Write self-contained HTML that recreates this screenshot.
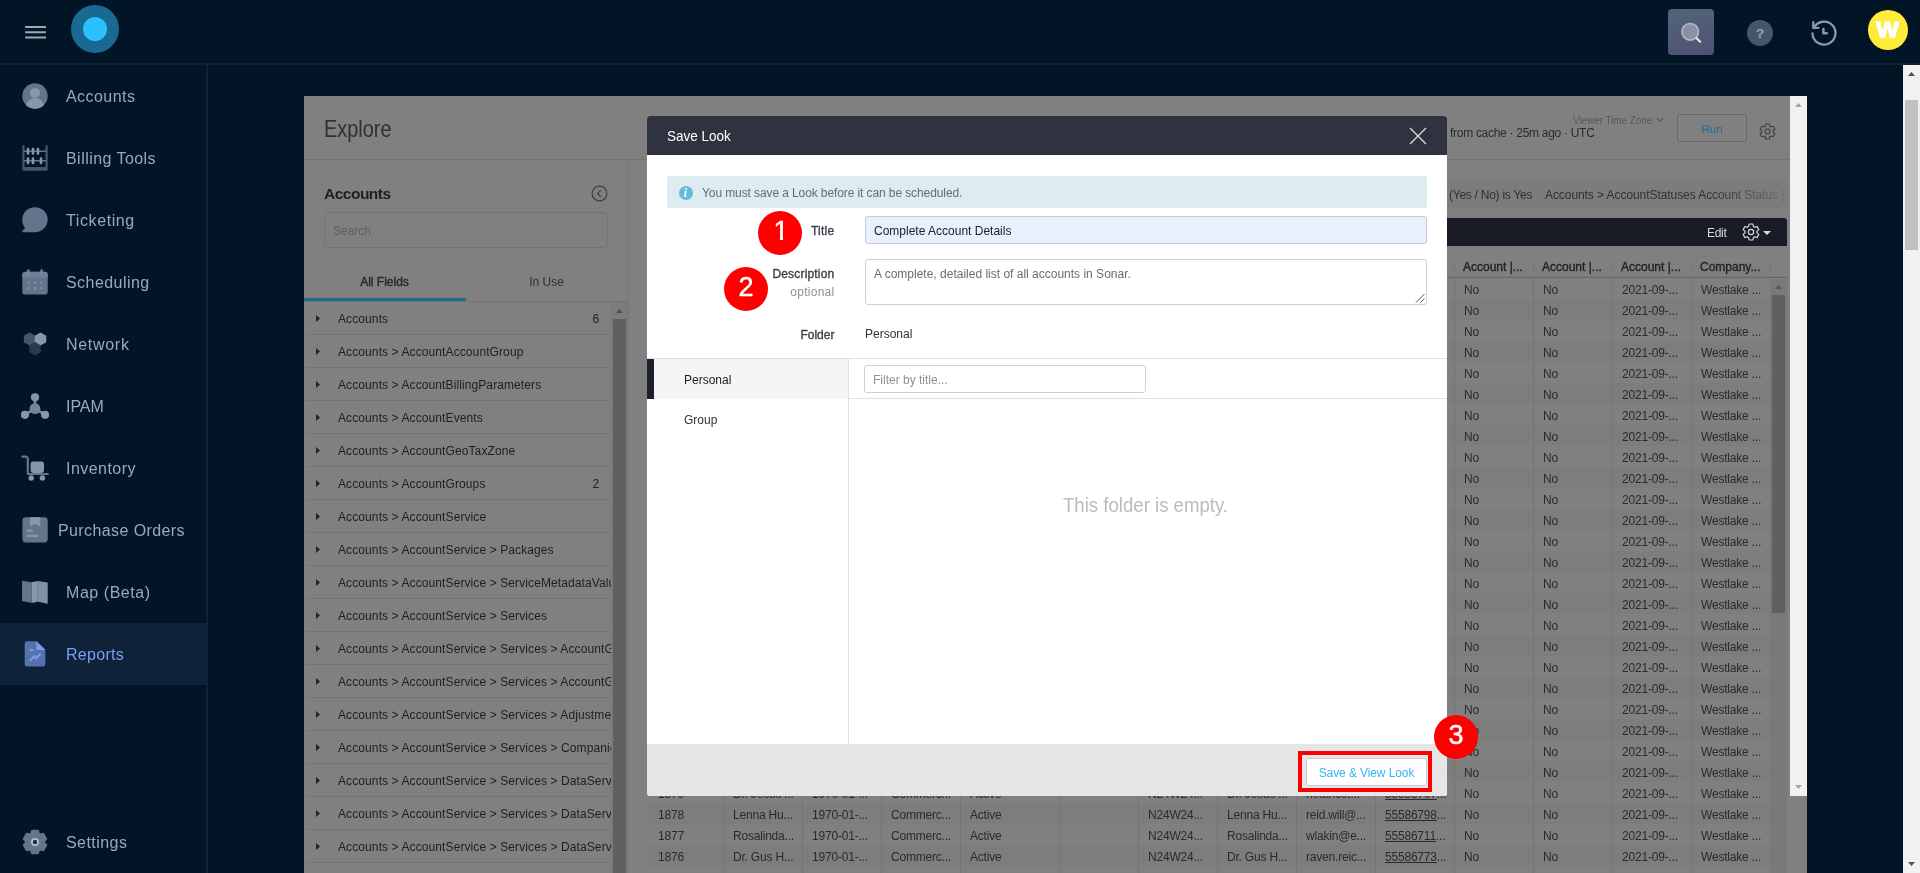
<!DOCTYPE html>
<html lang="en">
<head>
<meta charset="utf-8">
<title>Save Look</title>
<style>
*{box-sizing:border-box;margin:0;padding:0}
html,body{width:1920px;height:873px;overflow:hidden;background:#021527;font-family:"Liberation Sans",sans-serif}
#wrap{position:absolute;left:0;top:0;width:1920px;height:873px;will-change:transform}
.abs{position:absolute}
#topbar{position:absolute;left:0;top:0;width:1920px;height:65px;border-bottom:2px solid #112131}
#sidebar{position:absolute;left:0;top:64px;width:208px;height:809px;border-right:2px solid #112131}
.nav{position:absolute;left:0;width:206px;height:62px;color:#9ca8b9;font-size:16px;letter-spacing:.45px}
.nav span{position:absolute;left:66px;top:22px;line-height:20px;white-space:nowrap}
.nav svg{position:absolute;left:21px;top:17px;width:28px;height:28px}
.nav.active{background:#0e2239;color:#7b9ff2}
/* outer scrollbar */
#osb{position:absolute;left:1903px;top:65px;width:17px;height:808px;background:#f1f1f1}
#osb .thumb{position:absolute;left:2px;top:35px;width:13px;height:150px;background:#c1c1c1}
.arr{position:absolute;width:0;height:0;border-left:4px solid transparent;border-right:4px solid transparent}
/* iframe */
#frame{position:absolute;left:304px;top:96px;width:1503px;height:777px;background:#808080;overflow:hidden;font-family:"Liberation Sans",sans-serif;font-size:12px;color:#222}
#fsb{position:absolute;left:1486px;top:0;width:17px;height:700px;background:#f1f1f1}
/* modal */
#modal{position:absolute;left:343px;top:20px;width:800px;height:680px;background:#fff;border-radius:3px;overflow:hidden}
#mhead{position:absolute;left:0;top:0;width:800px;height:39px;background:#2f3340}

.t12{font-size:12px;line-height:16px;white-space:nowrap}
.lbl{color:#383f48;-webkit-text-stroke:.350px #383f48}
#mtitle{color:#fff;font-size:15px;line-height:20px;white-space:nowrap;transform:scaleX(.9);transform-origin:0 50%}
.red{position:absolute;width:44px;height:44px;border-radius:50%;background:#ff0000;color:#fff;font-size:27px;line-height:41px;text-align:center;-webkit-text-stroke:.500px #fff}
#mfoot{position:absolute;left:0;top:628px;width:800px;height:52px;background:#e6e6e6}


.fi{position:relative;height:33px;border-bottom:1px solid #757575;white-space:nowrap;overflow:hidden;font-size:12px;line-height:34px;color:#1e1e1e;letter-spacing:.100px}
.fi i{position:absolute;left:10px;top:13px;width:4px;height:7px;background:#222;clip-path:polygon(0 0,100% 50%,0 100%)}
.fi span{position:absolute;left:32px;top:0}
.fi b{position:absolute;left:284px;width:12px;top:0;text-align:center;font-weight:normal;font-size:12px;background:#808080}

.th{color:#222;-webkit-text-stroke:.350px #222}
.tr{position:absolute;left:0;width:1122px;height:21px;font-size:12px;line-height:21px;color:#2a2a2a;white-space:nowrap;letter-spacing:-.200px}
.tr.odd{background:#7d7d7d}
.tr span{position:absolute;top:2px}
.red i{position:absolute;background:#ff0000}
.au,.ad{position:absolute;width:7px;height:4px}
.au{clip-path:polygon(50% 0,100% 100%,0 100%)}
.ad{clip-path:polygon(0 0,100% 0,50% 100%)}
</style>
</head>
<body>
<div id="wrap">
<div id="topbar">
  <svg class="abs" style="left:20px;top:20px" width="32" height="24" viewBox="0 0 32 24"><path d="M5.200 6.100h20.800v2H5.200zM5.200 11.300h20.800v2H5.200zM5.200 16.500h20.800v2.100H5.200z" fill="#9ea7b2"/></svg>
  <div class="abs" style="left:71px;top:5px;width:48px;height:48px;border-radius:50%;background:#196a92"></div>
  <div class="abs" style="left:83px;top:17px;width:24px;height:24px;border-radius:50%;background:#2dc0ff"></div>
  <div class="abs" style="left:1783px;top:12px;width:1px;height:40px;background:#06192c"></div><div class="abs" style="left:1856px;top:12px;width:1px;height:40px;background:#06192c"></div>
  <div class="abs" style="left:1668px;top:9px;width:46px;height:46px;border-radius:4px;background:linear-gradient(165deg,#53647a 0%,#4f5273 100%)">
    <svg class="abs" style="left:9px;top:9px" width="28" height="28" viewBox="0 0 28 28"><circle cx="13.200" cy="13.800" r="8.300" fill="#8a90a6" stroke="#b4b9c6" stroke-width="1.600"/><path d="M19.400 20l3.800 3.800" stroke="#e8eaee" stroke-width="2" stroke-linecap="round"/></svg>
  </div>
  <div class="abs" style="left:1747px;top:20px;width:26px;height:26px;border-radius:50%;background:#45566a;color:#8e9bab;font-weight:bold;font-size:13.500px;line-height:27px;text-align:center;-webkit-text-stroke:.400px #8e9bab">?</div>
  <svg class="abs" style="left:1809px;top:18px" width="30" height="30" viewBox="0 0 30 30" fill="none" stroke="#8b98aa" stroke-width="2.300" stroke-linecap="round" stroke-linejoin="round"><path d="M4.700 10A11.500 11.500 0 1 1 3.500 15.500"/><path d="M4.300 4.200v5.600h5.200"/><path d="M14.400 11v4.200h3.400" stroke-width="2.500"/></svg>
  <div class="abs" style="left:1868px;top:10px;width:40px;height:40px;border-radius:50%;background:#ffeb3b;color:#fff;font-weight:bold;font-size:22.500px;line-height:40px;text-align:center;-webkit-text-stroke:1.300px #fff"><span style="display:inline-block;transform:scaleX(1.060)">W</span></div>
</div>
<div id="sidebar">
  <div class="nav" style="top:1px"><svg viewBox="0 0 28 28"><defs><clipPath id="ca"><circle cx="14" cy="14" r="12.7"/></clipPath></defs><circle cx="14" cy="14" r="12.7" fill="#64748b"/><g clip-path="url(#ca)" fill="#8996a8"><circle cx="14" cy="11" r="5"/><ellipse cx="14" cy="25.5" rx="9.3" ry="9.5"/></g></svg><span style="left:66px">Accounts</span></div>
  <div class="nav" style="top:63px"><svg viewBox="0 0 28 28"><path d="M1.3 1.3h2.2v21.8h21v-21.8h2.2v24a1.4 1.4 0 0 1-1.4 1.4h-22.6a1.4 1.4 0 0 1-1.4-1.4z" fill="#46566a"/><path d="M3 7.2h22M3 16.8h22" stroke="#64748b" stroke-width="1.6"/><g fill="#8996a8"><rect x="5.7" y="3.7" width="2.6" height="7" rx="1.3"/><rect x="10.7" y="3.7" width="2.6" height="7" rx="1.3"/><rect x="15.7" y="3.7" width="2.6" height="7" rx="1.3"/><rect x="5.7" y="13.3" width="2.6" height="7" rx="1.3"/><rect x="10.7" y="13.3" width="2.6" height="7" rx="1.3"/><rect x="18.7" y="13.3" width="2.6" height="7" rx="1.3"/></g></svg><span style="left:66px">Billing Tools</span></div>
  <div class="nav" style="top:125px"><svg viewBox="0 0 28 28"><path d="M14 1.2c7 0 12.7 5.3 12.7 12.3S21 26.3 14 26.3H2.2c-.9 0-1.3-1-.7-1.6l2.600-2.700C2.300 19.800 1.300 16.800 1.300 13.500 1.300 6.500 7 1.200 14 1.200z" fill="#64748b"/></svg><span style="left:66px;letter-spacing:.600px">Ticketing</span></div>
  <div class="nav" style="top:187px"><svg viewBox="0 0 28 28"><rect x="1.3" y="3.800" width="25.400" height="22.800" rx="3.200" fill="#64748b"/><path d="M1.300 9.800v-2.800a3.200 3.200 0 0 1 3.200-3.200h19a3.200 3.200 0 0 1 3.200 3.200v2.800z" fill="#6f7f95"/><rect x="6.300" y="1.200" width="2.200" height="5.600" rx="1.100" fill="#7a8aa0"/><rect x="19.500" y="1.200" width="2.200" height="5.600" rx="1.100" fill="#7a8aa0"/><g fill="#8996a8"><rect x="6.600" y="13.800" width="2" height="2"/><rect x="13" y="13.800" width="2" height="2"/><rect x="19.400" y="13.800" width="2" height="2"/><rect x="6.600" y="19.200" width="2" height="2"/><rect x="13" y="19.200" width="2" height="2"/><rect x="19.400" y="19.200" width="2" height="2"/></g></svg><span style="left:66px">Scheduling</span></div>
  <div class="nav" style="top:249px"><svg viewBox="0 0 28 28"><polygon points="8.60,2.40 14.32,5.70 14.32,12.30 8.60,15.60 2.88,12.30 2.88,5.70" fill="#46566a"/><polygon points="19.50,2.40 25.22,5.70 25.22,12.30 19.50,15.60 13.78,12.30 13.78,5.70" fill="#8996a8"/><polygon points="14.10,12.20 19.82,15.50 19.82,22.10 14.10,25.40 8.38,22.10 8.38,15.50" fill="#2a3a4c"/></svg><span style="left:66px;letter-spacing:.700px">Network</span></div>
  <div class="nav" style="top:311px"><svg viewBox="0 0 28 28"><path d="M14 5.300v11.300M14 16.600l-10.300 6.200M14 16.600l10.300 6.200" stroke="#7a899d" stroke-width="2.600"/><circle cx="14" cy="5.300" r="4.100" fill="#8996a8"/><circle cx="3.900" cy="22.800" r="4.100" fill="#8996a8"/><circle cx="24.100" cy="22.800" r="4.100" fill="#8996a8"/><circle cx="14" cy="16.600" r="5.400" fill="#76859a"/></svg><span style="left:66px;letter-spacing:-.050px">IPAM</span></div>
  <div class="nav" style="top:373px"><svg viewBox="0 0 28 28"><path d="M1.400 2.600h3.200a2.200 2.200 0 0 1 2.200 2.200v15.200h20" fill="none" stroke="#64748b" stroke-width="2.200" stroke-linecap="round" stroke-linejoin="round"/><rect x="9.600" y="7.600" width="13.400" height="11.400" rx="2.400" fill="#8996a8"/><circle cx="10.200" cy="24" r="2.700" fill="#8996a8"/><circle cx="21.400" cy="24" r="2.700" fill="#8996a8"/></svg><span style="left:66px">Inventory</span></div>
  <div class="nav" style="top:435px"><svg viewBox="0 0 28 28"><rect x="1.400" y="1.300" width="25.300" height="25.200" rx="3.400" fill="#64748b"/><path d="M9 1.300h10.300v9.300l-5.150-2.600l-5.150 2.600z" fill="#8996a8"/><path d="M6.500 14.700h4.800M6.500 19.900h9.700" stroke="#8996a8" stroke-width="2.200" stroke-linecap="round"/></svg><span style="left:58px;letter-spacing:.400px">Purchase Orders</span></div>
  <div class="nav" style="top:497px"><svg viewBox="0 0 28 28"><path d="M1 2.800l9.600 1.500v20.800l-9.600-2z" fill="#64748b"/><path d="M10.600 4.300l6.200-1.300v20.800l-6.200 1.300z" fill="#8996a8"/><path d="M16.800 3l9.900 1.500v21.200l-9.900-1.900z" fill="#8390a3"/></svg><span style="left:66px;letter-spacing:.550px">Map (Beta)</span></div>
  <div class="nav active" style="top:559px"><svg viewBox="0 0 28 28"><path d="M6.200 1.200h9.600l8.500 8.300v14.600a2.500 2.500 0 0 1-2.500 2.500h-15.600a2.500 2.500 0 0 1-2.500-2.500v-20.400a2.500 2.500 0 0 1 2.500-2.500z" fill="#5672ae"/><path d="M15.200 1.200l9.100 8.900h-6.600a2.500 2.500 0 0 1-2.500-2.500z" fill="#7b9be6"/><path d="M9.200 10.200h2.600" stroke="#7b9be6" stroke-width="2" stroke-linecap="round"/><path d="M9.500 20.300l4-4.200l1.600 2.200l3.800-3.800" fill="none" stroke="#7b9be6" stroke-width="2.200" stroke-linecap="round" stroke-linejoin="round"/></svg><span style="left:66px;letter-spacing:.300px">Reports</span></div>
  <div class="nav" style="top:747px"><svg viewBox="0 0 28 28"><path d="M10.81 5.69 L11.31 3.23 L16.69 3.23 L17.19 5.69 L19.60 7.08 L21.98 6.29 L24.67 10.94 L22.79 12.61 L22.79 15.39 L24.67 17.06 L21.98 21.71 L19.60 20.92 L17.19 22.31 L16.69 24.77 L11.31 24.77 L10.81 22.31 L8.40 20.92 L6.02 21.71 L3.33 17.06 L5.21 15.39 L5.21 12.61 L3.33 10.94 L6.02 6.29 L8.40 7.08Z" fill="#64748b" stroke="#64748b" stroke-width="3" stroke-linejoin="round"/><circle cx="14" cy="14" r="3.100" fill="#1e3046" stroke="#b4bfcc" stroke-width="1.800"/></svg><span style="left:66px">Settings</span></div>
</div>
<div id="osb"><div class="thumb"></div><div class="au" style="left:5px;top:7px;background:#505050"></div><div class="ad" style="left:5px;top:797px;background:#505050"></div></div>
<div id="frame">
  <div id="bg">
    <span class="abs" id="explore" style="left:20px;top:18.500px;font-size:23.200px;line-height:28px;color:#303030;transform:scaleX(.858);transform-origin:0 50%">Explore</span>
    <div class="abs" style="left:0;top:63px;width:1486px;height:1px;background:#747474"></div>
    <span class="abs t12" id="cache" style="left:1146px;top:29px;color:#2b2b2b;letter-spacing:-.290px">from cache · 25m ago · UTC</span>
    <span class="abs" id="vtz" style="left:1269px;top:19px;font-size:10px;line-height:12px;color:#585858;white-space:nowrap;letter-spacing:-.080px">Viewer Time Zone</span>
    <svg class="abs" style="left:1352px;top:20.500px" width="8" height="6" viewBox="0 0 8 6"><path d="M.8 1l3.200 3.200L7.200 1" fill="none" stroke="#585858" stroke-width="1.200"/></svg>
    <div class="abs" style="left:1373px;top:18px;width:70px;height:28px;border:1px solid #6a6a6a;border-radius:2px;color:#1a6e92;font-size:11.500px;line-height:28px;text-align:center">Run</div>
    <svg class="abs" style="left:1453.500px;top:25.500px" width="19" height="19" viewBox="0 0 24 24" fill="none" stroke="#3a3a3a" stroke-width="1.300"><path d="M19.140 12.940c.040-.300.060-.610.060-.940 0-.320-.020-.640-.070-.940l2.030-1.580a.490.490 0 0 0 .120-.610l-1.920-3.320a.488.488 0 0 0-.590-.220l-2.390.960c-.500-.380-1.030-.700-1.620-.940l-.360-2.540a.484.484 0 0 0-.480-.410h-3.840c-.240 0-.430.170-.470.410l-.360 2.540c-.590.240-1.130.570-1.620.940l-2.390-.960c-.220-.080-.470 0-.590.220L2.740 8.870c-.120.210-.080.470.120.610l2.030 1.580c-.050.300-.090.630-.090.940s.020.640.070.940l-2.030 1.580a.490.490 0 0 0-.120.610l1.920 3.320c.120.220.370.290.590.220l2.390-.960c.500.380 1.030.700 1.620.940l.360 2.540c.050.240.240.410.480.410h3.840c.240 0 .440-.170.470-.410l.360-2.540c.590-.240 1.130-.560 1.620-.940l2.390.960c.220.080.470 0 .590-.220l1.920-3.320c.120-.220.070-.470-.120-.610l-2.010-1.580z"/><circle cx="12" cy="12" r="3.200"/></svg>
    <div class="abs" style="left:324px;top:64px;width:1px;height:720px;background:#767676"></div>
    <span class="abs" id="acct" style="left:20px;top:87.800px;font-size:15.500px;line-height:20px;font-weight:bold;color:#1f1f1f;letter-spacing:-.500px">Accounts</span>
    <svg class="abs" style="left:287px;top:89px" width="17" height="17" viewBox="0 0 17 17" fill="none" stroke="#3a414c" stroke-width="1.200"><circle cx="8.500" cy="8.500" r="7.400"/><path d="M9.800 5.200L6.500 8.500l3.300 3.300"/></svg>
    <div class="abs" style="left:20px;top:116px;width:284px;height:36px;border:1px solid #747474;border-radius:4px"><span class="abs t12" style="left:8px;top:10px;color:#5e5e5e">Search</span></div>
    <span class="abs t12" id="allf" style="left:0;width:161px;top:178px;text-align:center;color:#262626;-webkit-text-stroke:.350px #262626">All Fields</span>
    <span class="abs t12" id="inuse" style="left:161px;width:163px;top:178px;text-align:center;color:#303030">In Use</span>
    <div class="abs" style="left:0;top:205px;width:324px;height:1px;background:#757575"></div>
    <div class="abs" style="left:0;top:202px;width:162px;height:3px;background:#1a6e92"></div>
    <div class="abs" id="flist" style="left:2px;top:206px;width:305px;height:580px;overflow:hidden">
    <div class="fi"><i></i><span>Accounts</span><b>6</b></div>
    <div class="fi"><i></i><span>Accounts &gt; AccountAccountGroup</span></div>
    <div class="fi"><i></i><span>Accounts &gt; AccountBillingParameters</span></div>
    <div class="fi"><i></i><span>Accounts &gt; AccountEvents</span></div>
    <div class="fi"><i></i><span>Accounts &gt; AccountGeoTaxZone</span></div>
    <div class="fi"><i></i><span>Accounts &gt; AccountGroups</span><b>2</b></div>
    <div class="fi"><i></i><span>Accounts &gt; AccountService</span></div>
    <div class="fi"><i></i><span>Accounts &gt; AccountService &gt; Packages</span></div>
    <div class="fi"><i></i><span>Accounts &gt; AccountService &gt; ServiceMetadataValues</span></div>
    <div class="fi"><i></i><span>Accounts &gt; AccountService &gt; Services</span></div>
    <div class="fi"><i></i><span>Accounts &gt; AccountService &gt; Services &gt; AccountGroups</span></div>
    <div class="fi"><i></i><span>Accounts &gt; AccountService &gt; Services &gt; AccountGeoTax</span></div>
    <div class="fi"><i></i><span>Accounts &gt; AccountService &gt; Services &gt; Adjustments</span></div>
    <div class="fi"><i></i><span>Accounts &gt; AccountService &gt; Services &gt; Companies</span></div>
    <div class="fi"><i></i><span>Accounts &gt; AccountService &gt; Services &gt; DataService</span></div>
    <div class="fi"><i></i><span>Accounts &gt; AccountService &gt; Services &gt; DataServiceA</span></div>
    <div class="fi"><i></i><span>Accounts &gt; AccountService &gt; Services &gt; DataServiceB</span></div>
    <div class="fi"><i></i><span>Accounts &gt; AccountService &gt; Services &gt; Expiring</span></div>
    </div>
    <div class="abs" style="left:307px;top:206px;width:17px;height:580px;background:#7b7b7b"></div><div class="abs" style="left:309px;top:223px;width:13px;height:560px;background:#606060"></div>
    <div class="au" style="left:312px;top:213px;background:#505050"></div>
  <div class="abs" style="left:344px;top:84px;width:1139px;height:28px;background:#7c7c7c;border-radius:3px"></div>
    <span class="abs t12" id="f1" style="left:1145px;top:91px;color:#303030;letter-spacing:-.260px">(Yes / No) is Yes</span>
    <span class="abs t12" id="f2" style="left:1241px;top:91px;color:#303030;letter-spacing:-.070px;width:240px;overflow:hidden;-webkit-mask-image:linear-gradient(90deg,#000 68%,rgba(0,0,0,.2) 100%);mask-image:linear-gradient(90deg,#000 68%,rgba(0,0,0,.2) 100%)">Accounts &gt; AccountStatuses Account Status |</span>
    <div class="abs" style="left:344px;top:122px;width:1139px;height:28px;background:#191c26;border-radius:3px 3px 0 0"></div>
    <span class="abs t12" id="edit" style="left:1403px;top:129px;color:#d9d9d9;letter-spacing:-.300px">Edit</span>
    <svg class="abs" style="left:1437px;top:126px" width="20" height="20" viewBox="0 0 24 24" fill="none" stroke="#d9d9d9" stroke-width="1.400"><path d="M19.140 12.940c.040-.300.060-.610.060-.940 0-.320-.020-.640-.070-.940l2.030-1.580a.490.490 0 0 0 .120-.610l-1.920-3.320a.488.488 0 0 0-.590-.220l-2.390.960c-.500-.380-1.030-.700-1.620-.940l-.360-2.540a.484.484 0 0 0-.480-.410h-3.840c-.240 0-.430.170-.470.410l-.360 2.540c-.590.240-1.130.570-1.620.940l-2.390-.960c-.220-.080-.470 0-.590.220L2.740 8.870c-.120.210-.080.470.120.610l2.030 1.580c-.050.300-.090.630-.090.940s.020.640.070.940l-2.030 1.580a.490.490 0 0 0-.120.610l1.920 3.320c.120.220.370.290.590.220l2.390-.960c.500.380 1.030.700 1.620.940l.360 2.540c.050.240.240.410.480.410h3.840c.240 0 .440-.170.470-.410l.360-2.540c.590-.240 1.130-.560 1.620-.940l2.390.960c.220.080.470 0 .590-.220l1.920-3.320c.120-.220.070-.470-.120-.610l-2.010-1.580z"/><circle cx="12" cy="12" r="3.200"/></svg>
    <div class="arr" style="left:1459px;top:135px;border-top:4px solid #d9d9d9"></div>
    <div class="abs" id="tbl" style="left:344px;top:150px;width:1139px;height:640px;overflow:hidden">
    <div class="abs" style="left:75px;top:15px;width:1px;height:10px;background:#747474"></div>
    <div class="abs" style="left:154px;top:15px;width:1px;height:10px;background:#747474"></div>
    <div class="abs" style="left:233px;top:15px;width:1px;height:10px;background:#747474"></div>
    <div class="abs" style="left:312px;top:15px;width:1px;height:10px;background:#747474"></div>
    <div class="abs" style="left:411px;top:15px;width:1px;height:10px;background:#747474"></div>
    <div class="abs" style="left:490px;top:15px;width:1px;height:10px;background:#747474"></div>
    <div class="abs" style="left:569px;top:15px;width:1px;height:10px;background:#747474"></div>
    <div class="abs" style="left:648px;top:15px;width:1px;height:10px;background:#747474"></div>
    <div class="abs" style="left:727px;top:15px;width:1px;height:10px;background:#747474"></div>
    <div class="abs" style="left:806px;top:15px;width:1px;height:10px;background:#747474"></div>
    <span class="abs t12 th" style="left:815px;top:13px">Account |...</span>
    <div class="abs" style="left:885px;top:15px;width:1px;height:10px;background:#747474"></div>
    <span class="abs t12 th" style="left:894px;top:13px">Account |...</span>
    <div class="abs" style="left:964px;top:15px;width:1px;height:10px;background:#747474"></div>
    <span class="abs t12 th" style="left:973px;top:13px">Account |...</span>
    <div class="abs" style="left:1043px;top:15px;width:1px;height:10px;background:#747474"></div>
    <span class="abs t12 th" style="left:1052px;top:13px">Company...</span>
    <div class="abs" style="left:1122px;top:15px;width:1px;height:10px;background:#747474"></div>
    <div class="abs" style="left:0;top:30px;width:1139px;height:1px;background:#7a7a7a"></div><div class="abs" style="left:0;top:31px;width:1139px;height:1px;background:#686868"></div>
    <div class="tr" style="top:32px"><span style="left:816px">No</span><span style="left:895px">No</span><span style="left:974px">2021-09-...</span><span style="left:1053px">Westlake ...</span></div>
    <div class="tr odd" style="top:53px"><span style="left:816px">No</span><span style="left:895px">No</span><span style="left:974px">2021-09-...</span><span style="left:1053px">Westlake ...</span></div>
    <div class="tr" style="top:74px"><span style="left:816px">No</span><span style="left:895px">No</span><span style="left:974px">2021-09-...</span><span style="left:1053px">Westlake ...</span></div>
    <div class="tr odd" style="top:95px"><span style="left:816px">No</span><span style="left:895px">No</span><span style="left:974px">2021-09-...</span><span style="left:1053px">Westlake ...</span></div>
    <div class="tr" style="top:116px"><span style="left:816px">No</span><span style="left:895px">No</span><span style="left:974px">2021-09-...</span><span style="left:1053px">Westlake ...</span></div>
    <div class="tr odd" style="top:137px"><span style="left:816px">No</span><span style="left:895px">No</span><span style="left:974px">2021-09-...</span><span style="left:1053px">Westlake ...</span></div>
    <div class="tr" style="top:158px"><span style="left:816px">No</span><span style="left:895px">No</span><span style="left:974px">2021-09-...</span><span style="left:1053px">Westlake ...</span></div>
    <div class="tr odd" style="top:179px"><span style="left:816px">No</span><span style="left:895px">No</span><span style="left:974px">2021-09-...</span><span style="left:1053px">Westlake ...</span></div>
    <div class="tr" style="top:200px"><span style="left:816px">No</span><span style="left:895px">No</span><span style="left:974px">2021-09-...</span><span style="left:1053px">Westlake ...</span></div>
    <div class="tr odd" style="top:221px"><span style="left:816px">No</span><span style="left:895px">No</span><span style="left:974px">2021-09-...</span><span style="left:1053px">Westlake ...</span></div>
    <div class="tr" style="top:242px"><span style="left:816px">No</span><span style="left:895px">No</span><span style="left:974px">2021-09-...</span><span style="left:1053px">Westlake ...</span></div>
    <div class="tr odd" style="top:263px"><span style="left:816px">No</span><span style="left:895px">No</span><span style="left:974px">2021-09-...</span><span style="left:1053px">Westlake ...</span></div>
    <div class="tr" style="top:284px"><span style="left:816px">No</span><span style="left:895px">No</span><span style="left:974px">2021-09-...</span><span style="left:1053px">Westlake ...</span></div>
    <div class="tr odd" style="top:305px"><span style="left:816px">No</span><span style="left:895px">No</span><span style="left:974px">2021-09-...</span><span style="left:1053px">Westlake ...</span></div>
    <div class="tr" style="top:326px"><span style="left:816px">No</span><span style="left:895px">No</span><span style="left:974px">2021-09-...</span><span style="left:1053px">Westlake ...</span></div>
    <div class="tr odd" style="top:347px"><span style="left:816px">No</span><span style="left:895px">No</span><span style="left:974px">2021-09-...</span><span style="left:1053px">Westlake ...</span></div>
    <div class="tr" style="top:368px"><span style="left:816px">No</span><span style="left:895px">No</span><span style="left:974px">2021-09-...</span><span style="left:1053px">Westlake ...</span></div>
    <div class="tr odd" style="top:389px"><span style="left:816px">No</span><span style="left:895px">No</span><span style="left:974px">2021-09-...</span><span style="left:1053px">Westlake ...</span></div>
    <div class="tr" style="top:410px"><span style="left:816px">No</span><span style="left:895px">No</span><span style="left:974px">2021-09-...</span><span style="left:1053px">Westlake ...</span></div>
    <div class="tr odd" style="top:431px"><span style="left:816px">No</span><span style="left:895px">No</span><span style="left:974px">2021-09-...</span><span style="left:1053px">Westlake ...</span></div>
    <div class="tr" style="top:452px"><span style="left:816px">No</span><span style="left:895px">No</span><span style="left:974px">2021-09-...</span><span style="left:1053px">Westlake ...</span></div>
    <div class="tr odd" style="top:473px"><span style="left:816px">No</span><span style="left:895px">No</span><span style="left:974px">2021-09-...</span><span style="left:1053px">Westlake ...</span></div>
    <div class="tr" style="top:494px"><span style="left:816px">No</span><span style="left:895px">No</span><span style="left:974px">2021-09-...</span><span style="left:1053px">Westlake ...</span></div>
    <div class="tr odd" style="top:515px"><span style="left:816px">No</span><span style="left:895px">No</span><span style="left:974px">2021-09-...</span><span style="left:1053px">Westlake ...</span></div>
    <div class="tr" style="top:536px"><span style="left:10px">1879</span><span style="left:85px">Dr. Jesus ...</span><span style="left:164px">1970-01-...</span><span style="left:243px">Commerc...</span><span style="left:322px">Active</span><span style="left:500px">N24W24...</span><span style="left:579px">Dr. Jesus ...</span><span style="left:658px">heathcot...</span><span style="left:737px"><u>55586767</u>...</span><span style="left:816px">No</span><span style="left:895px">No</span><span style="left:974px">2021-09-...</span><span style="left:1053px">Westlake ...</span></div>
    <div class="tr odd" style="top:557px"><span style="left:10px">1878</span><span style="left:85px">Lenna Hu...</span><span style="left:164px">1970-01-...</span><span style="left:243px">Commerc...</span><span style="left:322px">Active</span><span style="left:500px">N24W24...</span><span style="left:579px">Lenna Hu...</span><span style="left:658px">reid.will@...</span><span style="left:737px"><u>55586798</u>...</span><span style="left:816px">No</span><span style="left:895px">No</span><span style="left:974px">2021-09-...</span><span style="left:1053px">Westlake ...</span></div>
    <div class="tr" style="top:578px"><span style="left:10px">1877</span><span style="left:85px">Rosalinda...</span><span style="left:164px">1970-01-...</span><span style="left:243px">Commerc...</span><span style="left:322px">Active</span><span style="left:500px">N24W24...</span><span style="left:579px">Rosalinda...</span><span style="left:658px">wlakin@e...</span><span style="left:737px"><u>55586711</u>...</span><span style="left:816px">No</span><span style="left:895px">No</span><span style="left:974px">2021-09-...</span><span style="left:1053px">Westlake ...</span></div>
    <div class="tr odd" style="top:599px"><span style="left:10px">1876</span><span style="left:85px">Dr. Gus H...</span><span style="left:164px">1970-01-...</span><span style="left:243px">Commerc...</span><span style="left:322px">Active</span><span style="left:500px">N24W24...</span><span style="left:579px">Dr. Gus H...</span><span style="left:658px">raven.reic...</span><span style="left:737px"><u>55586773</u>...</span><span style="left:816px">No</span><span style="left:895px">No</span><span style="left:974px">2021-09-...</span><span style="left:1053px">Westlake ...</span></div>
        <div class="abs" style="left:75px;top:32px;width:1px;height:610px;background:#757575"></div>
    <div class="abs" style="left:154px;top:32px;width:1px;height:610px;background:#757575"></div>
    <div class="abs" style="left:233px;top:32px;width:1px;height:610px;background:#757575"></div>
    <div class="abs" style="left:312px;top:32px;width:1px;height:610px;background:#757575"></div>
    <div class="abs" style="left:411px;top:32px;width:1px;height:610px;background:#757575"></div>
    <div class="abs" style="left:490px;top:32px;width:1px;height:610px;background:#757575"></div>
    <div class="abs" style="left:569px;top:32px;width:1px;height:610px;background:#757575"></div>
    <div class="abs" style="left:648px;top:32px;width:1px;height:610px;background:#757575"></div>
    <div class="abs" style="left:727px;top:32px;width:1px;height:610px;background:#757575"></div>
    <div class="abs" style="left:806px;top:32px;width:1px;height:610px;background:#757575"></div>
    <div class="abs" style="left:885px;top:32px;width:1px;height:610px;background:#757575"></div>
    <div class="abs" style="left:964px;top:32px;width:1px;height:610px;background:#757575"></div>
    <div class="abs" style="left:1043px;top:32px;width:1px;height:610px;background:#757575"></div>
    <div class="abs" style="left:1122px;top:32px;width:1px;height:610px;background:#757575"></div>
    </div>
    <div class="abs" style="left:1466px;top:183px;width:17px;height:600px;background:#797979"></div><div class="abs" style="left:1468px;top:199px;width:13px;height:318px;background:#606060"></div>
    <div class="au" style="left:1471px;top:189px;background:#5a5a5a"></div>
  </div>
  <div id="fsb"><div class="au" style="left:5px;top:7px;background:#a3a3a3"></div><div class="ad" style="left:5px;top:689px;background:#a3a3a3"></div></div>
  <div id="modal">
    <div id="mhead"><span class="abs" id="mtitle" style="left:20px;top:10px">Save Look</span>
      <svg class="abs" style="left:762px;top:11px" width="18" height="18" viewBox="0 0 18 18"><path d="M1 1l16 16M17 1L1 17" stroke="#dcdde0" stroke-width="1.3"/></svg>
    </div>
    <div class="abs" id="alert" style="left:20px;top:60px;width:760px;height:32px;background:#ddecf0;border-radius:3px">
      <div class="abs" style="left:11.500px;top:9.500px;width:14px;height:14px;border-radius:50%;background:#68badc;color:#fff;font:italic bold 12px/14px 'Liberation Serif',serif;text-align:center">i</div>
      <span class="abs t12" id="alerttxt" style="left:35px;top:9px;color:#6b6b6b;letter-spacing:-.100px">You must save a Look before it can be scheduled.</span>
    </div>
    <span class="abs t12 lbl" style="right:612.600px;top:107px;letter-spacing:.250px">Title</span>
    <div class="abs" style="left:218px;top:100px;width:562px;height:28px;background:#e8f0fe;border:1px solid #c7ccd1;border-radius:3px"><span class="abs t12" id="tval" style="left:8px;top:6px;color:#222">Complete Account Details</span></div>
    <span class="abs t12 lbl" style="right:612.600px;top:150px;letter-spacing:.180px">Description</span>
    <span class="abs t12" style="right:612.600px;top:168px;color:#8a939b;letter-spacing:.250px">optional</span>
    <div class="abs" style="left:218px;top:143px;width:562px;height:46px;background:#fff;border:1px solid #d0d0d0;border-radius:3px"><span class="abs t12" id="dval" style="left:8px;top:6px;color:#6b6b6b">A complete, detailed list of all accounts in Sonar.</span>
      <svg class="abs" style="right:1px;bottom:1px" width="10" height="10" viewBox="0 0 10 10"><path d="M9.500 1L1 9.500M9.500 5.500L5.500 9.500" stroke="#555" stroke-width="1"/></svg>
    </div>
    <span class="abs t12 lbl" style="right:612.600px;top:211px">Folder</span>
    <span class="abs t12" style="left:218px;top:210px;color:#333">Personal</span>
    <div class="abs" style="left:0;top:242px;width:800px;height:1px;background:#e0e0e0"></div>
    <div class="abs" style="left:0;top:243px;width:201px;height:40px;background:#f5f5f5;border-left:7px solid #1c212b"></div>
    <span class="abs t12" style="left:37px;top:256px;color:#222">Personal</span>
    <span class="abs t12" style="left:37px;top:296px;color:#333">Group</span>
    <div class="abs" style="left:201px;top:243px;width:1px;height:385px;background:#e0e0e0"></div>
    <div class="abs" style="left:217px;top:249px;width:282px;height:28px;background:#fff;border:1px solid #d0d0d0;border-radius:3px"><span class="abs t12" style="left:8px;top:6px;color:#8a939b">Filter by title...</span></div>
    <div class="abs" style="left:202px;top:282px;width:598px;height:1px;background:#e0e0e0"></div>
    <span class="abs" id="empty" style="left:416px;top:377px;font-size:20px;line-height:24px;color:#bbb;white-space:nowrap;transform:scaleX(.93);transform-origin:0 50%">This folder is empty.</span>
    <div id="mfoot">
      <div class="abs" style="left:659px;top:14px;width:121px;height:28px;background:#fff;border:1px solid #ccc;border-radius:2px;color:#2fb7f5;font-size:12px;line-height:29px;text-align:center;letter-spacing:-.100px">Save &amp; View Look</div>
      <div class="abs" style="left:651px;top:7px;width:134px;height:41px;border:4px solid #ff0000"></div>
    </div>
  </div>
  <div class="red" style="left:454px;top:115px;text-indent:2px">1<i style="left:16px;top:25px;width:6px;height:5px"></i><i style="left:25px;top:25px;width:6px;height:5px"></i><i style="left:16px;top:29px;width:15px;height:1px"></i></div>
  <div class="red" style="left:420px;top:171px">2</div>
  <div class="red" style="left:1130px;top:619px">3</div>
</div>
</div>
</body>
</html>
